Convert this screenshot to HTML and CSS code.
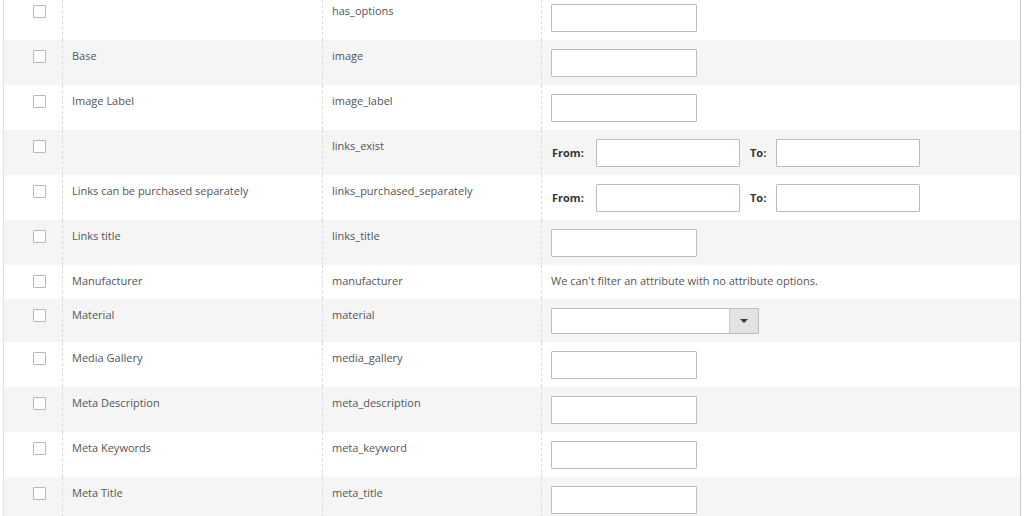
FILE: index.html
```html
<!DOCTYPE html>
<html lang="en">
<head>
    <meta charset="UTF-8">
    <title>Attributes</title>
    <link rel="stylesheet" href="styles.css">
</head>
<body>
    <table class="attr-grid">
        <colgroup>
            <col class="col-check">
            <col class="col-label">
            <col class="col-code">
            <col class="col-value">
        </colgroup>
        <tbody>
            <tr>
                <td><span class="grid-check"></span></td>
                <td></td>
                <td>has_options</td>
                <td><input class="grid-input" type="text"></td>
            </tr>
            <tr>
                <td><span class="grid-check"></span></td>
                <td>Base</td>
                <td>image</td>
                <td><input class="grid-input" type="text"></td>
            </tr>
            <tr>
                <td><span class="grid-check"></span></td>
                <td>Image Label</td>
                <td>image_label</td>
                <td><input class="grid-input" type="text"></td>
            </tr>
            <tr>
                <td><span class="grid-check"></span></td>
                <td></td>
                <td>links_exist</td>
                <td>
                    <div class="range">
                        <label class="range-label">From:</label>
                        <input class="grid-input range-input" type="text">
                        <label class="range-label range-to">To:</label>
                        <input class="grid-input range-input" type="text">
                    </div>
                </td>
            </tr>
            <tr>
                <td><span class="grid-check"></span></td>
                <td>Links can be purchased separately</td>
                <td>links_purchased_separately</td>
                <td>
                    <div class="range">
                        <label class="range-label">From:</label>
                        <input class="grid-input range-input" type="text">
                        <label class="range-label range-to">To:</label>
                        <input class="grid-input range-input" type="text">
                    </div>
                </td>
            </tr>
            <tr>
                <td><span class="grid-check"></span></td>
                <td>Links title</td>
                <td>links_title</td>
                <td><input class="grid-input" type="text"></td>
            </tr>
            <tr class="text-row">
                <td><span class="grid-check"></span></td>
                <td>Manufacturer</td>
                <td>manufacturer</td>
                <td>We can't filter an attribute with no attribute options.</td>
            </tr>
            <tr>
                <td><span class="grid-check"></span></td>
                <td>Material</td>
                <td>material</td>
                <td>
                    <div class="grid-select">
                        <span class="grid-select-value"></span>
                        <span class="grid-select-btn"></span>
                    </div>
                </td>
            </tr>
            <tr>
                <td><span class="grid-check"></span></td>
                <td>Media Gallery</td>
                <td>media_gallery</td>
                <td><input class="grid-input" type="text"></td>
            </tr>
            <tr>
                <td><span class="grid-check"></span></td>
                <td>Meta Description</td>
                <td>meta_description</td>
                <td><input class="grid-input" type="text"></td>
            </tr>
            <tr>
                <td><span class="grid-check"></span></td>
                <td>Meta Keywords</td>
                <td>meta_keyword</td>
                <td><input class="grid-input" type="text"></td>
            </tr>
            <tr>
                <td><span class="grid-check"></span></td>
                <td>Meta Title</td>
                <td>meta_title</td>
                <td><input class="grid-input" type="text"></td>
            </tr>
        </tbody>
    </table>
</body>
</html>
```

FILE: styles.css
```css
body {
    margin: 0px;
    background-color: white;
    font-family: "Open Sans", "DejaVu Sans", sans-serif;
    font-size: 11px;
    color: #555;
    overflow: hidden;
}

.attr-grid {
    margin: -5px 0px 0px 3px;
    width: 1017px;
    border-collapse: collapse;
    table-layout: fixed;
    border-left: 1px solid #e0e0e0;
    border-right: 1px solid #c8c8c8;
}
.col-check { width: 59px; }
.col-label { width: 260px; }
.col-code { width: 219px; }
.col-value { width: 479px; }

.attr-grid td {
    padding: 9px 9px 8px 9px;
    vertical-align: top;
    line-height: 14px;
    border-left: 1px dashed #dadada;
    box-sizing: border-box;
}
.attr-grid td:first-child {
    border-left: none;
    padding-left: 29px;
    padding-top: 10px;
}
.attr-grid tr:nth-child(even) {
    background-color: #f5f5f5;
}
.attr-grid tr.text-row td {
    padding-bottom: 11px;
}

.grid-check {
    display: block;
    width: 13px;
    height: 13px;
    box-sizing: border-box;
    border: 1px solid #b8b8b8;
    border-radius: 1px;
    background-color: white;
}

.grid-input {
    display: block;
    width: 146px;
    height: 28px;
    margin: 0px;
    box-sizing: border-box;
    border: 1px solid #bdbdbd;
    border-radius: 1px;
    background-color: white;
    padding: 0px 6px;
}
.grid-input.range-input {
    width: 144px;
}

.range {
    display: flex;
    align-items: center;
}
.range-label {
    font-weight: 700;
    color: #333;
    width: 45px;
    padding-left: 1px;
    box-sizing: border-box;
}
.range-label.range-to {
    width: 36px;
    padding-left: 10px;
}

.grid-select {
    display: flex;
    width: 208px;
    height: 26px;
    box-sizing: border-box;
    border: 1px solid #bdbdbd;
    border-radius: 1px;
    background-color: white;
}
.grid-select-value {
    flex: 1;
}
.grid-select-btn {
    width: 28px;
    background-color: #e3e3e3;
    border-left: 1px solid #c8c8c8;
    position: relative;
}
.grid-select-btn::after {
    content: "";
    position: absolute;
    left: 10px;
    top: 10px;
    border-left: 4px solid transparent;
    border-right: 4px solid transparent;
    border-top: 4px solid #41362f;
}
```
